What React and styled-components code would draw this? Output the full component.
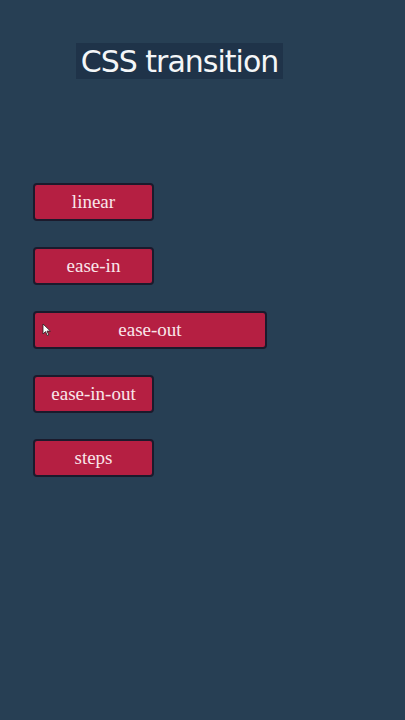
import React from 'react';
import styled, { createGlobalStyle } from 'styled-components';

const GlobalStyle = createGlobalStyle`
  html, body {
    margin: 0;
    padding: 0;
    background: #273f54;
  }
`;

const timings = [
  { name: 'linear', wide: false },
  { name: 'ease-in', wide: false },
  { name: 'ease-out', wide: true },
  { name: 'ease-in-out', wide: false },
  { name: 'steps', wide: false },
];

function App() {
  return (
    <Page>
      <GlobalStyle />
      <TitleRow>
        <Title>CSS transition</Title>
      </TitleRow>
      <List>
        {timings.map((t) => (
          <Box key={t.name} $wide={t.wide}>
            {t.name}
            {t.wide && (
              <Cursor viewBox="0 0 10 14" width="10" height="14">
                <path d="M1 1 L1 11 L3.5 8.6 L5.4 12.6 L6.8 12 L5 8.1 L8.4 8.1 Z" fill="#fff" stroke="#222" strokeWidth="0.8" />
              </Cursor>
            )}
          </Box>
        ))}
      </List>
    </Page>
  );
}

const Page = styled.div`
  width: 405px;
  height: 720px;
  box-sizing: border-box;
  padding-top: 43px;
  background: #273f54;
`;

const TitleRow = styled.div`
  display: flex;
  padding-left: 76px;
`;

const Title = styled.h1`
  margin: 0;
  height: 36px;
  width: 207px;
  display: flex;
  align-items: center;
  justify-content: center;
  background: #1f3349;
  color: #f4f6f8;
  font-family: "DejaVu Sans", Verdana, sans-serif;
  font-weight: normal;
  font-size: 30px;
  letter-spacing: -1px;
`;

const List = styled.div`
  display: flex;
  flex-direction: column;
  align-items: flex-start;
  gap: 26px;
  padding: 104px 0 0 33px;
`;

const Box = styled.div`
  position: relative;
  box-sizing: border-box;
  width: ${(p) => (p.$wide ? '234px' : '121px')};
  height: 38px;
  display: flex;
  align-items: center;
  justify-content: center;
  background: #b51f42;
  border: 2px solid #1b1a2c;
  border-radius: 4px;
  color: #f9e6ea;
  font-family: "Liberation Serif", "Times New Roman", serif;
  font-size: 19px;
`;

const Cursor = styled.svg`
  position: absolute;
  left: 7px;
  top: 10px;
`;

export default App;
